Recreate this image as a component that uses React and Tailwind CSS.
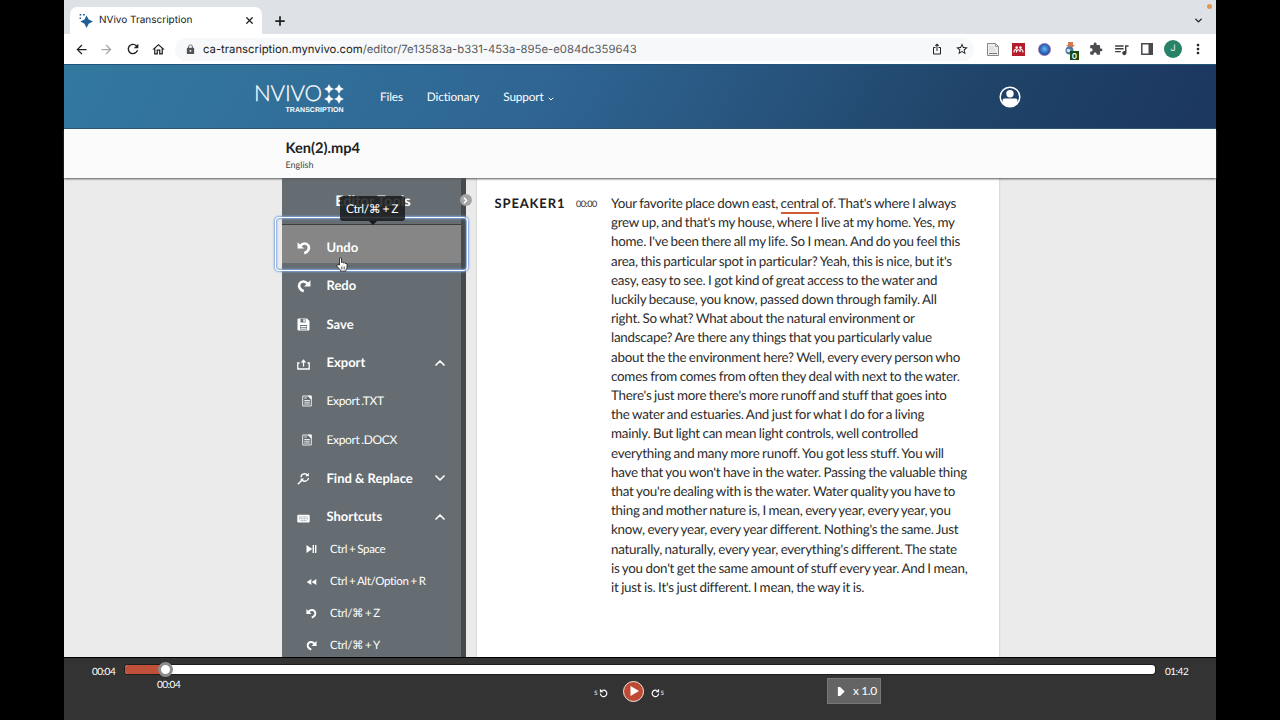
import React from "react";
import {
  MdArrowBack,
  MdArrowForward,
  MdRefresh,
  MdLock,
  MdStarBorder,
  MdExtension,
  MdQueueMusic,
  MdMoreVert,
  MdOutlineHome,
  MdOutlineIosShare,
} from "react-icons/md";
import { ChevronDown, ChevronUp, ChevronRight, Plus, X } from "lucide-react";

const transcript = [
  ["Your favorite place down east, ", "central", " of. That's where I always"],
  "grew up, and that's my house, where I live at my home. Yes, my",
  "home. I've been there all my life. So I mean. And do you feel this",
  "area, this particular spot in particular? Yeah, this is nice, but it's",
  "easy, easy to see. I got kind of great access to the water and",
  "luckily because, you know, passed down through family. All",
  "right. So what? What about the natural environment or",
  "landscape? Are there any things that you particularly value",
  "about the the environment here? Well, every every person who",
  "comes from comes from often they deal with next to the water.",
  "There's just more there's more runoff and stuff that goes into",
  "the water and estuaries. And just for what I do for a living",
  "mainly. But light can mean light controls, well controlled",
  "everything and many more runoff. You got less stuff. You will",
  "have that you won't have in the water. Passing the valuable thing",
  "that you're dealing with is the water. Water quality you have to",
  "thing and mother nature is, I mean, every year, every year, you",
  "know, every year, every year different. Nothing's the same. Just",
  "naturally, naturally, every year, everything's different. The state",
  "is you don't get the same amount of stuff every year. And I mean,",
  "it just is. It's just different. I mean, the way it is.",
];

const UndoIcon = ({ className = "" }) => (
  <svg viewBox="0 0 24 24" className={className} fill="none">
    <path d="M1 2v11h11z" fill="currentColor" />
    <path d="M6 8C9.500 3.500 16.500 3 19.500 8c2.500 4.500 0 10.500-7 13" stroke="currentColor" strokeWidth="4.400" />
  </svg>
);

const RedoIcon = ({ className = "" }) => (
  <svg viewBox="0 0 24 24" className={className} fill="none">
    <path d="M23 2v11H12z" fill="currentColor" />
    <path d="M18 8C14.500 3.500 7.500 3 4.500 8c-2.500 4.500 0 10.500 7 13" stroke="currentColor" strokeWidth="4.400" />
  </svg>
);

const SaveIcon = () => (
  <svg viewBox="0 0 13 13" className="h-[13px] w-[13px]">
    <path d="M1.500.5h8.500l2.500 2.500v8.500a1 1 0 0 1-1 1h-10a1 1 0 0 1-1-1v-10a1 1 0 0 1 1-1z" fill="#fff" />
    <path d="M3.500 1h5v3.500h-5zM3 7h7v4.500H3z" fill="#667075" />
    <path d="M6.300 1.300h1.500v2.500H6.300zM3.500 8h6v1h-6zM3.500 9.800h6v1h-6z" fill="#fff" />
  </svg>
);

const ExportIcon = () => (
  <svg viewBox="0 0 13 12" className="mt-0.5 h-3 w-[13px]" fill="none" stroke="#fff" strokeWidth="1.300">
    <path d="M2.500 5H.8v6h11.400V5h-1.700M6.500 8.500V3" />
    <path d="M3.800 4.500 6.500 1.300l2.700 3.200z" fill="#fff" stroke="none" />
  </svg>
);

const FileIcon = () => (
  <svg viewBox="0 0 10 12" className="h-3 w-2.5" fill="none" stroke="#e8eaeb">
    <path d="M.7 1h8.600v10H.7z" />
    <path d="M6 1h3.300v3.300z" fill="#fff" />
    <path d="M2.300 3h2.500M2.300 5.500h5.500M2.300 7.200h5.500M2.300 9h5.500" />
  </svg>
);

const FindIcon = () => (
  <svg viewBox="0 0 13 13" className="h-[13px] w-[13px]" fill="none" stroke="#fff" strokeWidth="1.400">
    <path d="M.8 12.200 4.300 8.700M4 5.200C4.300 1.500 8.500.8 10.500 3M11.500 6c-.5 3.500-4.500 4.200-6.500 2" />
    <path d="M11.800.7v3.500H8.300zM3.700 10V6.600h3.500z" fill="#fff" stroke="none" />
  </svg>
);

const KeyboardIcon = () => (
  <svg viewBox="0 0 13 9" className="mt-1 h-[9px] w-[13px]">
    <rect x=".3" y=".8" width="12.400" height="7.700" rx="1.200" fill="#fff" />
    <path d="M2 3h9M2 4.800h9M3.500 6.700h6" stroke="#8b9397" strokeWidth=".8" strokeDasharray="1.200 .4" />
  </svg>
);

const PlayPauseIcon = () => (
  <svg viewBox="0 0 11 10" className="h-2.5 w-[11px]" fill="#fff">
    <path d="M.5 1v8l5.800-4zM6.600 1H8v8H6.600zM9 1h1.400v8H9z" />
  </svg>
);

const RewindIcon = () => (
  <svg viewBox="0 0 11 8" className="mt-0.5 h-2 w-[11px]" fill="#fff">
    <path d="M5.300 1v6L.7 4zM10.300 1v6L5.700 4z" />
  </svg>
);

const menuItems = [
  { label: "Undo", icon: <UndoIcon className="h-3.5 w-3.5" />, active: true },
  { label: "Redo", icon: <RedoIcon className="h-3.5 w-3.5" /> },
  { label: "Save", icon: <SaveIcon /> },
  { label: "Export", icon: <ExportIcon />, chevron: "up" },
  { label: "Export .TXT", icon: <FileIcon />, sub: true },
  { label: "Export .DOCX", icon: <FileIcon />, sub: true },
  { label: "Find & Replace", icon: <FindIcon />, chevron: "down" },
  { label: "Shortcuts", icon: <KeyboardIcon />, chevron: "up" },
];

const shortcuts = [
  { label: "Ctrl + Space", icon: <PlayPauseIcon /> },
  { label: "Ctrl + Alt/Option + R", icon: <RewindIcon /> },
  { label: "Ctrl/⌘ + Z", icon: <UndoIcon className="h-[11px] w-[11px]" /> },
  { label: "Ctrl/⌘ + Y", icon: <RedoIcon className="h-[11px] w-[11px]" /> },
];

const BrowserChrome = () => (
  <div className="h-16 shrink-0 bg-[#dee1e6] font-['Inter',sans-serif] text-[#202124]">
    <div className="relative flex h-[34px] pl-1.5 pt-[7px]">
      <div className="flex h-[27px] w-[192px] items-center rounded-t-[7px] bg-white pl-[9px] pr-[7px]">
        <svg viewBox="0 0 12 12" className="h-3.5 w-3.5" fill="#1f5f95">
          <path d="M6.500 1.200 8.300 4.700l3.700 1.800-3.700 1.800L6.500 12 4.700 8.300 1.200 6.500l3.500-1.800z" />
          <path d="M.5 0H2v1.200H.5zM3.500 0H5v1.200H3.500zM.5 3H1.700v1.200H.5z" />
        </svg>
        <span className="ml-1.5 text-[10px]">NVivo Transcription</span>
        <X className="ml-auto h-[11px] w-[11px]" strokeWidth={2.800} />
      </div>
      <Plus className="ml-[11px] mt-[7px] h-[14px] w-[14px]" strokeWidth={3} />
      <ChevronDown className="ml-auto mr-3 mt-2 h-[11px] w-[11px]" strokeWidth={3} />
      <span className="absolute right-1 top-1 h-[5px] w-[5px] rounded-full bg-[#df9a52]" />
    </div>
    <div className="flex h-[30px] items-center bg-white pl-[10px] pr-2.5">
      <MdArrowBack className="h-[15px] w-[15px]" />
      <MdArrowForward className="ml-[10px] h-[15px] w-[15px] text-[#a5a8ab]" />
      <MdRefresh className="ml-[11px] h-[16px] w-[16px]" />
      <MdOutlineHome className="ml-[10px] h-[15px] w-[15px]" />
      <div className="ml-[9px] flex h-[23px] w-[799px] items-center rounded-full bg-[#f7f8f9] pl-2.5 pr-[5px]">
        <MdLock className="h-[11px] w-[11px] text-[#505357]" />
        <span className="ml-[7px] whitespace-nowrap text-[11.300px] text-[#55585c]">
          <span className="text-[#202124]">ca-transcription.mynvivo.com</span>
          /editor/7e13583a-b331-453a-895e-e084dc359643
        </span>
        <MdOutlineIosShare className="ml-auto h-[12px] w-[12px]" />
        <MdStarBorder className="ml-[12px] h-[14px] w-[14px]" />
      </div>
      <svg viewBox="0 0 12 13" className="ml-[13px] h-[13px] w-3 shrink-0">
        <path d="M.5.5h8l3 3v9H.5z" fill="#eee" stroke="#888" />
        <path d="M8.500.5v3h3" stroke="#999" fill="none" />
        <path d="M2 4h5M2 6h6M2 8h7" stroke="#ccc" strokeWidth=".7" />
        <path d="M2 10.500h8" stroke="#777" />
      </svg>
      <svg viewBox="0 0 13 13" className="ml-[13px] h-[13px] w-[13px] shrink-0">
        <path d="M0 0h13v13H0z" fill="#b31d2c" />
        <path d="M2 9.500c0-2 .5-3 1.500-3s1 1.500 1 3M4.500 9c0-3 3.500-3 3.500 0M8 9c0-2 0-2.500 1.200-2.500S11 7.500 11 9.500" stroke="#fff" strokeWidth="1.100" fill="none" />
        <circle cx="4.700" cy="4.600" r="1.300" fill="#fff" />
        <circle cx="8.400" cy="4.600" r="1.300" fill="#fff" />
      </svg>
      <span className="ml-[13px] h-[13px] w-[13px] shrink-0 rounded-full border-[1.500px] border-[#8c65ae] bg-[radial-gradient(circle_at_50%_45%,#67aeea_5%,#245eb0_60%,#173c78)]" />
      <span className="relative ml-[13px] h-4 w-3.5 shrink-0">
        <svg viewBox="0 0 14 16" className="h-4 w-3.5">
          <path d="M4 1h5v3h2L6.500 8 2 4h2z" fill="#d27a4a" />
          <circle cx="5.500" cy="9.500" r="4" fill="#497ba8" />
          <circle cx="4.500" cy="9.500" r="1.800" fill="#d4e2ee" />
        </svg>
        <span className="absolute left-[6px] top-[10px] flex h-[9px] w-[9px] items-center justify-center bg-[#174b13] text-[8px] font-semibold text-white">0</span>
      </span>
      <MdExtension className="ml-[11px] h-[14px] w-[14px] shrink-0 text-[#4a4c50]" />
      <MdQueueMusic className="ml-[10px] h-[17px] w-[17px] shrink-0 text-[#3c3f43]" />
      <svg viewBox="0 0 12 12" className="ml-[11px] h-3 w-3 shrink-0">
        <path d="M.8.8h10.400v10.400H.8z" fill="none" stroke="#484a4e" strokeWidth="1.500" />
        <path d="M7.500 0H12v12H7.500z" fill="#484a4e" />
      </svg>
      <span className="ml-[11px] flex h-[18px] w-[18px] shrink-0 items-center justify-center rounded-full bg-[#278268] text-[9px] text-[#e4f2ed]">J</span>
      <MdMoreVert className="ml-[8px] h-4 w-4 shrink-0" />
    </div>
  </div>
);

const Logo = () => (
  <svg viewBox="0 0 90 32" className="h-8 w-[90px] overflow-visible" fill="#fff">
    <text x="-1" y="20" fontSize="22" fontWeight="300" fontFamily="Lato, sans-serif" textLength="68" lengthAdjust="spacingAndGlyphs" stroke="#fff" strokeWidth=".25">NVIVO</text>
    <text x="30.500" y="30.500" fontSize="7" fontWeight="700" fontFamily="Liberation Sans, sans-serif" textLength="58" lengthAdjust="spacing">TRANSCRIPTION</text>
    {[[74, 8], [84, 8], [74, 18], [84, 18]].map(([x, y]) => (
      <path key={`${x}-${y}`} transform={`translate(${x} ${y})`} d="M0-4.500 1.600-1.600 4.500 0 1.600 1.600 0 4.500-1.600 1.600-4.500 0-1.600-1.600z" stroke="#fff" strokeWidth=".3" />
    ))}
  </svg>
);

const SiteHeader = () => (
  <header className="flex h-[65px] shrink-0 items-center border-t border-b border-t-[#20547a] border-b-[#285878] bg-linear-[120deg,#33799f_0%,#2f6593_42%,#204469_78%,#1b365f_100%] pl-[191px] text-[11.800px] tracking-[-0.150px] text-white">
    <Logo />
    <nav className="flex items-center pt-px">
      <a className="ml-[35px]">Files</a>
      <a className="ml-6">Dictionary</a>
      <a className="ml-6 flex items-center">
        Support <ChevronDown className="ml-[3px] mt-1 h-2 w-2" strokeWidth={3} />
      </a>
    </nav>
    <svg viewBox="0 0 22 22" className="ml-auto mr-[195px] h-[22px] w-[22px]">
      <circle cx="11" cy="11" r="9.800" fill="none" stroke="#fff" strokeWidth="1.500" />
      <circle cx="11" cy="7.700" r="3.700" fill="#fff" />
      <path d="M3.500 17v-2.500q0-2 2-2h11q2 0 2 2V17c-4 5-11 5-15 0z" fill="#fff" />
    </svg>
  </header>
);

const Sidebar = () => (
  <aside className="relative w-[184px] shrink-0 border-r-[5px] border-[#474a4c] bg-[#656d72] text-white">
    <div className="flex h-[46px] items-center justify-center pl-[4px] pt-0.5 text-[14.500px] font-bold">Editor Tools</div>
    {menuItems.map((item) => (
      <div
        key={item.label}
        className={`flex h-[38.500px] items-center pl-[15px] pt-[8px] ${item.active ? "border-t border-[#3c3e40] bg-[#868686]" : ""}`}
      >
        <span className={`flex w-[14px] shrink-0 items-center justify-center ${item.sub ? "ml-[3px] mr-[13px]" : "mr-[16px]"}`}>
          {item.icon}
        </span>
        <span className={item.sub ? "text-[12px] tracking-[-0.350px] [word-spacing:-1px]" : "text-[13px] font-bold"}>{item.label}</span>
        {item.chevron === "up" && <ChevronUp className="ml-auto mr-[13px] h-4 w-4" strokeWidth={2.500} />}
        {item.chevron === "down" && <ChevronDown className="ml-auto mr-[13px] h-4 w-4" strokeWidth={2.500} />}
      </div>
    ))}
    {shortcuts.map((item) => (
      <div key={item.label} className="flex h-8 items-center pl-[24px] pt-[3px] text-[11.500px] tracking-[-0.340px] [word-spacing:-0.700px]">
        <span className="-mt-px mr-[13.500px] flex w-[11px] shrink-0 justify-center">{item.icon}</span>
        {item.label}
      </div>
    ))}

    <span className="absolute -right-[11px] top-[16px] flex h-3 w-3 items-center justify-center rounded-full bg-[#a5a5a5]">
      <ChevronRight className="h-[9px] w-[9px]" strokeWidth={4.500} />
    </span>
    {/* focus ring around the active row */}
    <div className="absolute -left-[7px] top-[39px] h-[54px] w-[193px] rounded-[4px] border-[1.500px] border-white shadow-[0_0_2px_1px_#7fa4dd,inset_0_0_2px_1px_#7fa4dd]" />
    <div className="absolute left-[58px] top-[18px] flex h-[25px] w-[65px] items-center justify-center rounded-[3px] bg-[#181a1b]/85 text-[12px] tracking-[-0.400px] [word-spacing:-0.500px]">
      Ctrl/⌘ + Z
      <span className="absolute -bottom-[4px] left-[29px] border-x-4 border-t-4 border-x-transparent border-t-[#181a1b]" />
    </div>
    <svg viewBox="0 0 12 15" className="absolute left-[54px] top-[79px] h-[15px] w-3">
      <path
        d="M3.500 8V2q0-1.300 1-1.300T5.500 2v3.500q1.300-.8 1.800.3 1.200-.5 1.700.6 1.800-.6 2 .8v3q0 1.500-1.200 3v1H4.500v-1L1 9.300q-.6-1.300.5-1.600z"
        fill="#fff"
        stroke="#111"
        strokeWidth=".8"
      />
      <path d="M5.500 9.500v3M7 9.500v3M8.500 9.500v3" stroke="#333" strokeWidth=".6" />
    </svg>
  </aside>
);

const Transcript = () => (
  <main className="ml-[11.500px] flex w-[521.500px] shrink-0 bg-white pt-[16px] text-[#2c2c2c] shadow-[0_0_2px_#bbb]">
    <div className="ml-[17.500px] w-[81.500px] shrink-0 text-[13px] font-bold leading-[19.200px] tracking-[0.850px] text-[#202020]">SPEAKER1</div>
    <div className="w-[35px] shrink-0 text-[9px] leading-[20px] tracking-[-0.500px]">00:00</div>
    <div className="whitespace-nowrap text-[13.400px] leading-[19.200px] tracking-[-0.250px] [word-spacing:-0.550px]">
      {transcript.map((line, i) => (
        <div key={i}>
          {Array.isArray(line) ? (
            <>
              {line[0]}
              <span className="relative">
                {line[1]}
                <span className="absolute inset-x-0 -bottom-[3px] h-[2px] bg-[#cf5c35]" />
              </span>
              {line[2]}
            </>
          ) : (
            line
          )}
        </div>
      ))}
    </div>
  </main>
);

const SeekIcon = ({ flip }) => (
  <svg viewBox="0 0 10 11" className={`h-2.5 w-[9px] ${flip ? "-scale-x-100" : ""}`} fill="none">
    <path d="M3.500 2.700A3.600 3.600 0 1 1 1.500 6" stroke="#fff" strokeWidth="1.300" />
    <path d="M1 .8v4h4z" fill="#fff" />
  </svg>
);

const Player = () => (
  <footer className="h-[63px] shrink-0 border-t border-black bg-[#333] text-[10px] text-white">
    <div className="flex h-[23px] items-center">
      <span className="ml-[28px] mt-[6px] w-[32.500px] tracking-[-0.500px]">00:04</span>
      <div className="relative h-[9px] w-[1030.500px] rounded-[3px] bg-white ring-1 ring-black/40">
        <div className="h-full w-[41px] rounded-l-[3px] bg-[#c0503a]" />
        <span className="absolute -top-[3px] left-[33px] h-[15px] w-[15px] rounded-full border-[3px] border-[#8d8d8d] bg-white" />
        <span className="absolute left-[32.500px] top-[13px] leading-[14px] tracking-[-0.500px]">00:04</span>
      </div>
      <span className="ml-[10px] mt-[6px] tracking-[-0.500px]">01:42</span>
    </div>
    <div className="flex h-[20px] items-center">
      <div className="ml-[530px] flex w-[73px] shrink-0 items-center text-[6px]">
        <span className="mr-0.5 mt-[4px]">5</span>
        <span className="mt-[4px]"><SeekIcon /></span>
        <span className="ml-[15px] mr-[7px] flex h-[21px] w-[21px] shrink-0 items-center justify-center rounded-full border-[1.500px] border-[#f4e8dc] bg-[#be4935]">
          <svg viewBox="0 0 9 10" className="ml-px h-2.5 w-[9px]" fill="#fff"><path d="M.5 0v10L9 5z" /></svg>
        </span>
        <span className="mt-[4px]"><SeekIcon flip /></span>
        <span className="mt-[4px]">5</span>
      </div>
      <button className="ml-[160px] flex h-[26px] w-[54px] items-center border border-[#777] bg-[#646464] pl-[9px] text-[12px] tracking-[-0.400px]">
        <svg viewBox="0 0 8 10" className="mr-[8px] h-[9px] w-2" fill="#fff"><path d="M.5 0H3l5 5-5 5H.5z" /></svg>
        x 1.0
      </button>
    </div>
  </footer>
);

export default function App() {
  return (
    <div className="flex h-[720px] w-[1280px] justify-center overflow-hidden bg-black">
      <div className="flex w-[1152px] flex-col font-['Lato',sans-serif] [font-variant-ligatures:none] [text-rendering:geometricPrecision]">
        <BrowserChrome />
        <SiteHeader />
        <div className="z-10 h-[49px] shrink-0 bg-[#fbfbfb] pl-[221.500px] pt-[10px] shadow-[0_1px_2px_#555]">
          <h1 className="text-[14.600px] font-bold leading-[19px] text-[#202122]">Ken(2).mp4</h1>
          <p className="text-[9px] leading-[13px] text-[#444]">English</p>
        </div>
        <div className="flex h-[479px] shrink-0 overflow-hidden bg-[#ebebeb] pl-[217.500px]">
          <Sidebar />
          <Transcript />
        </div>
        <Player />
      </div>
    </div>
  );
}
